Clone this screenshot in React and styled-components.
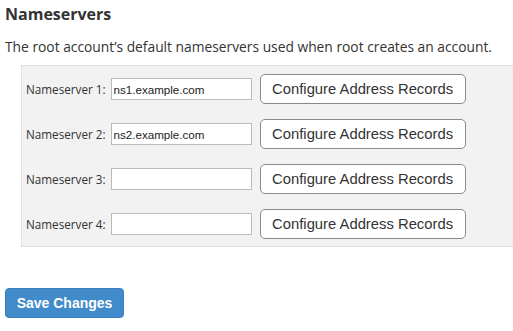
import React from 'react';
import styled, { createGlobalStyle } from 'styled-components';

const GlobalStyle = createGlobalStyle`
  html, body {
    margin: 0;
    padding: 0;
    background: #fff;
  }
`;

const Page = styled.div`
  padding: 0 0 0 5px;
  font-family: "Open Sans", sans-serif;
  color: #333;
`;

const Heading = styled.h3`
  margin: 0;
  padding-top: 2px;
  font-size: 16px;
  font-weight: 700;
  line-height: 24px;
`;

const Description = styled.p`
  margin: 11px 0 8px 0;
  font-size: 13.8px;
  line-height: 20px;
`;

const Panel = styled.div`
  margin-left: 16px;
  background: #f2f2f2;
  border: 1px solid #e0e0e0;
  border-right: none;
  padding: 8px 0 7px 4px;
  display: flex;
  flex-direction: column;
  gap: 15px;
`;

const Row = styled.div`
  display: flex;
  align-items: center;
  height: 30px;
`;

const Label = styled.label`
  font-size: 11.7px;
  color: #333;
  margin-right: 5px;
  white-space: nowrap;
`;

const TextInput = styled.input`
  box-sizing: border-box;
  width: 141px;
  height: 22px;
  border: 1px solid #bbb;
  background: #fff;
  padding: 0 2px;
  font-family: "Liberation Sans", Arial, sans-serif;
  font-size: 11.6px;
  color: #222;
  outline: none;
  margin-right: 8px;
`;

const ConfigButton = styled.button`
  box-sizing: border-box;
  width: 206px;
  height: 30px;
  border: 1px solid #8a8a8a;
  border-radius: 5px;
  background: #fff;
  font-family: "Liberation Sans", Arial, sans-serif;
  font-size: 14.8px;
  color: #333;
  padding: 0;
`;

const Footer = styled.div`
  padding-top: 41px;
`;

const SaveButton = styled.button`
  box-sizing: border-box;
  width: 119px;
  height: 30px;
  border: 1px solid #3a7fc0;
  border-radius: 4px;
  background: #428bca;
  color: #fff;
  font-family: "Liberation Sans", Arial, sans-serif;
  font-size: 14px;
  font-weight: 700;
  padding: 0;
`;

const servers = ['ns1.example.com', 'ns2.example.com', '', ''];

export default function App() {
  return (
    <Page>
      <GlobalStyle />
      <Heading>Nameservers</Heading>
      <Description>The root account’s default nameservers used when root creates an account.</Description>
      <Panel>
        {servers.map((value, i) => (
          <Row key={i}>
            <Label>Nameserver {i + 1}:</Label>
            <TextInput defaultValue={value} />
            <ConfigButton>Configure Address Records</ConfigButton>
          </Row>
        ))}
      </Panel>
      <Footer>
        <SaveButton>Save Changes</SaveButton>
      </Footer>
    </Page>
  );
}
